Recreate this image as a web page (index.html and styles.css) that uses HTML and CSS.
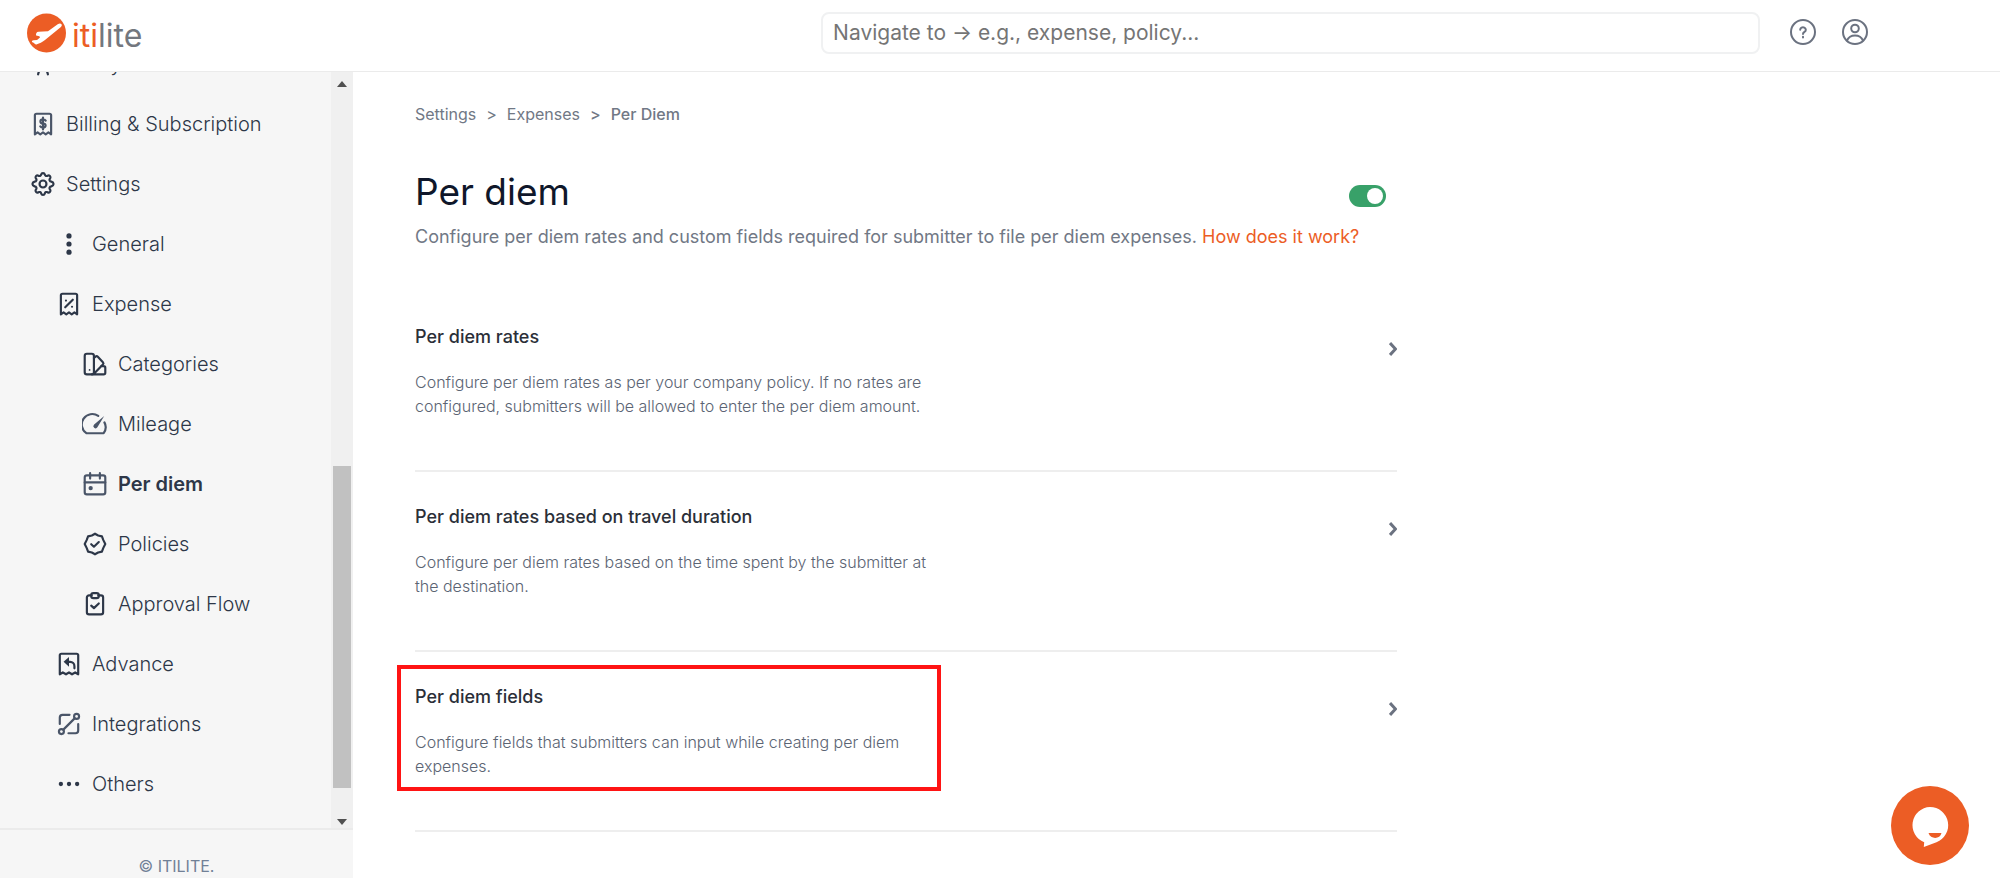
FILE: index.html
```html
<!DOCTYPE html>
<html lang="en">
<head>
    <meta charset="UTF-8">
    <meta name="viewport" content="width=device-width, initial-scale=1.0">
    <title>Per diem - itilite</title>
    <link rel="stylesheet" href="styles.css">
</head>
<body>
    <header class="header">
        <a class="logo" href="#">
            <svg class="logo-mark" viewBox="0 0 39 39" aria-hidden="true">
                <circle cx="19.5" cy="19.5" r="19.5" fill="#ec5d25"/>
                <path d="M34.500 10.800c.7 1 .2 2.200-.9 3L18 26.500c-3 2.300-5.500 3.500-8 4.300-1.500.5-2.300-.2-3-1.200l-2-1c-.3-1 .4-1.700 1.500-1.800l3.500-.4 3-2.400-.6-1.300-3.300-.7c-.5-1.800.5-3.600 2.400-3.700l9.500-.5 9.700-7c1.500-1 3-1.200 3.800 0z" fill="#fff"/>
            </svg>
            <span class="logo-text"><span class="logo-accent">iti</span>lite</span>
        </a>
        <input class="search" type="text" aria-label="Navigate to" placeholder="Navigate to → e.g., expense, policy...">
        <div class="header-actions">
            <button type="button" aria-label="Help">
                <svg class="icon" viewBox="0 0 26 26">
                    <circle cx="13" cy="13" r="12"/>
                    <path d="M10.200 10.800a2.800 2.500 0 1 1 4.300 2.100c-1 .6-1.500 1-1.500 2.200M13 17.800v.7"/>
                </svg>
            </button>
            <button type="button" aria-label="Account">
                <svg class="icon" viewBox="0 0 26 26">
                    <circle cx="13" cy="13" r="12"/>
                    <circle cx="13" cy="9.500" r="3.800"/>
                    <path d="M5 21.500c1.500-3.500 4.500-5 8-5s6.500 1.500 8 5"/>
                </svg>
            </button>
        </div>
    </header>

    <div class="layout">
        <aside class="sidebar">
            <div class="nav-area">
                <nav class="nav">
                    <a class="nav-item" href="#">
                        <svg class="icon" viewBox="0 0 24 24"><circle cx="12" cy="7" r="5"/><path d="M7.500 21.500c.5-3 2-5 4.500-6.500 2.500 1.500 4 3.500 4.500 6.500"/></svg>
                        Policy
                    </a>
                    <a class="nav-item" href="#">
                        <svg class="icon soft" viewBox="0 0 24 24"><path d="M4.500 21.500V4a1.500 1.500 0 0 1 1.500-1.500h12A1.500 1.500 0 0 1 19.500 4v17.500l-2.500-1.700-2.500 1.700-2.500-1.700-2.500 1.700-2.500-1.700z"/><path d="M14.500 8.800c-.5-.7-1.300-1-2.500-1-3.200 0-3.200 3.700 0 3.700s3.200 3.700 0 3.700c-1.200 0-2-.3-2.500-1M12 6v11"/></svg>
                        Billing &amp; Subscription
                    </a>
                    <a class="nav-item" href="#">
                        <svg class="icon" viewBox="0 0 24 24"><path d="M10.325 3.317c.426-1.756 2.924-1.756 3.350 0a1.724 1.724 0 0 0 2.573 1.066c1.543-.94 3.310.826 2.370 2.370a1.724 1.724 0 0 0 1.065 3.072c2.756.926 2.756 3.424 0 4.350a1.724 1.724 0 0 0-1.066 3.073c.94 1.543-.826 3.310-2.370 2.370a1.724 1.724 0 0 0-2.572 1.065c-.426 1.756-2.924 1.756-3.350 0a1.724 1.724 0 0 0-2.573-1.066c-1.543.94-3.310-.826-2.370-2.370a1.724 1.724 0 0 0-1.065-3.072c-2.756-.926-2.756-3.424 0-4.350a1.724 1.724 0 0 0 1.066-3.073c-.94-1.543.826-3.310 2.370-2.370a1.724 1.724 0 0 0 2.572-1.065z"/><circle cx="12" cy="12" r="3.200"/></svg>
                        Settings
                    </a>
                    <a class="nav-item level-1" href="#">
                        <svg class="icon dots" viewBox="0 0 24 24"><circle cx="12" cy="4.500" r="2.400"/><circle cx="12" cy="12" r="2.400"/><circle cx="12" cy="19.500" r="2.400"/></svg>
                        General
                    </a>
                    <a class="nav-item level-1" href="#">
                        <svg class="icon" viewBox="0 0 24 24"><path d="M4.500 21.500V4a1.500 1.500 0 0 1 1.500-1.500h12A1.500 1.500 0 0 1 19.500 4v17.500l-2.500-1.700-2.500 1.700-2.500-1.700-2.500 1.700-2.500-1.700zM8.500 15l7-7M9.200 8.800v.01M14.800 14.500v.01"/></svg>
                        Expense
                    </a>
                    <a class="nav-item level-2" href="#">
                        <svg class="icon" viewBox="0 0 24 24"><rect x="2.500" y="2.500" width="8.500" height="19" rx="2"/><path d="M11 6.500l1.500-1.300a1.500 1.500 0 0 1 2.100.1l4.700 5a1.500 1.500 0 0 1 0 2.100L11 21M17.500 14H20a1.500 1.500 0 0 1 1.500 1.500V20a1.500 1.500 0 0 1-1.500 1.500H9"/><circle class="dot" cx="7" cy="17.500" r=".8"/></svg>
                        Categories
                    </a>
                    <a class="nav-item level-2" href="#">
                        <svg class="icon soft" viewBox="0 0 24 24"><path d="M15 4.500A9.500 9.500 0 0 0 4 20.500h16a9.500 9.500 0 0 0 .7-10"/><path class="dot" d="M20.500 4.500l-9.300 8a2 2 0 1 0 3 2.600z"/></svg>
                        Mileage
                    </a>
                    <a class="nav-item level-2 active" href="#">
                        <svg class="icon soft" viewBox="0 0 24 24"><rect x="2.500" y="4" width="19" height="17.500" rx="2"/><path d="M2.500 10.500h19M7.500 2v5M16.500 2v5"/><circle class="dot" cx="8" cy="15.800" r="2"/></svg>
                        Per diem
                    </a>
                    <a class="nav-item level-2" href="#">
                        <svg class="icon" viewBox="0 0 24 24"><path d="M12 2.500l2.900 1.600 3.500.9 1.200 3.200 1.900 3.800-1.900 3.800-1.200 3.200-3.500.9-2.900 1.600-2.900-1.600-3.500-.9-1.200-3.200L2.500 12l1.900-3.800L5.600 5l3.500-.9zM8.500 12.200l2.500 2.300 4.500-4.300"/></svg>
                        Policies
                    </a>
                    <a class="nav-item level-2" href="#">
                        <svg class="icon" viewBox="0 0 24 24"><path d="M9 4H6.500a2 2 0 0 0-2 2v13.500a2 2 0 0 0 2 2h11a2 2 0 0 0 2-2V6a2 2 0 0 0-2-2H15M8.500 13.500l2.500 2.300 4.500-4.300"/><rect x="8.500" y="2" width="7" height="4.500" rx="2"/></svg>
                        Approval Flow
                    </a>
                    <a class="nav-item level-1" href="#">
                        <svg class="icon" viewBox="0 0 24 24"><path d="M3.500 21.500V4A1.500 1.500 0 0 1 5 2.500h14A1.500 1.500 0 0 1 20.500 4v17.500l-2.800-1.700-2.900 1.700-2.800-1.700-2.800 1.700-2.900-1.700zM17 16v-2a4 4 0 0 0-4-4h-3"/><path class="dot" d="M12 5.500L7 10l5 4.500z"/></svg>
                        Advance
                    </a>
                    <a class="nav-item level-1" href="#">
                        <svg class="icon soft" viewBox="0 0 24 24"><circle cx="5" cy="19" r="2.300"/><circle cx="19" cy="5" r="2.300"/><path d="M6.800 17.200L17.200 6.800M3.500 12V6A2.500 2.500 0 0 1 6 3.500h6.500M20.500 12v6a2.500 2.500 0 0 1-2.500 2.500h-6.500"/></svg>
                        Integrations
                    </a>
                    <a class="nav-item level-1" href="#">
                        <svg class="icon dots" viewBox="0 0 24 24"><circle cx="4.500" cy="12" r="2"/><circle cx="12" cy="12" r="2"/><circle cx="19.500" cy="12" r="2"/></svg>
                        Others
                    </a>
                </nav>
                <div class="scrollbar" aria-hidden="true">
                    <span class="arrow arrow-up"></span>
                    <div class="track"><div class="thumb"></div></div>
                    <span class="arrow arrow-down"></span>
                </div>
            </div>
            <footer class="sidebar-footer">© ITILITE.</footer>
        </aside>

        <main class="content">
            <nav class="breadcrumb" aria-label="Breadcrumb">
                <a href="#">Settings</a>
                <span>&gt;</span>
                <a href="#">Expenses</a>
                <span class="current">&gt;</span>
                <a class="current" href="#">Per Diem</a>
            </nav>

            <div class="title-row">
                <h1>Per diem</h1>
                <input class="toggle" type="checkbox" aria-label="Enable per diem" checked>
            </div>
            <p class="subtitle">Configure per diem rates and custom fields required for submitter to file per diem expenses. <a href="#">How does it work?</a></p>

            <section class="options">
                <article class="option">
                    <div class="option-text">
                        <h2>Per diem rates</h2>
                        <p>Configure per diem rates as per your company policy. If no rates are configured, submitters will be allowed to enter the per diem amount.</p>
                    </div>
                    <button type="button" aria-label="Open per diem rates">
                        <svg viewBox="0 0 8 14"><path d="M1 1l5.500 6L1 13"/></svg>
                    </button>
                </article>
                <article class="option">
                    <div class="option-text">
                        <h2>Per diem rates based on travel duration</h2>
                        <p>Configure per diem rates based on the time spent by the submitter at the destination.</p>
                    </div>
                    <button type="button" aria-label="Open travel duration rates">
                        <svg viewBox="0 0 8 14"><path d="M1 1l5.500 6L1 13"/></svg>
                    </button>
                </article>
                <article class="option">
                    <div class="option-text highlight">
                        <h2>Per diem fields</h2>
                        <p>Configure fields that submitters can input while creating per diem expenses.</p>
                    </div>
                    <button type="button" aria-label="Open per diem fields">
                        <svg viewBox="0 0 8 14"><path d="M1 1l5.500 6L1 13"/></svg>
                    </button>
                </article>
            </section>
        </main>
    </div>

    <button class="chat-button" type="button" aria-label="Open chat">
        <svg viewBox="0 0 78 78">
            <path d="M39 20a18.200 18.200 0 0 1 6.500 35.200L32.800 60l.4-4.800A18.200 18.200 0 0 1 39 20z" fill="#fff"/>
            <path d="M37.500 46h13c-1.500 6.500-11 6.500-13 0z" fill="#ec5d25"/>
        </svg>
    </button>
</body>
</html>
```

FILE: styles.css
```css
:root {
    --accent: #ec5d25;
    --text-dark: #0f172a;
    --text-nav: #2d3748;
    --text-muted: #717885;
    --icon: #2d3748;
    --icon-soft: #4a5568;
    --sidebar-bg: #f6f6f6;
    --border: #ebebeb;
}

* {
    margin: 0;
    padding: 0;
    box-sizing: border-box;
}

body {
    height: 100vh;
    display: flex;
    flex-direction: column;
    overflow: hidden;
    background: #fff;
    color: var(--text-dark);
    font-family: Inter, 'Liberation Sans', sans-serif;
}

a {
    color: inherit;
    text-decoration: none;
}

button {
    border: none;
    background: none;
    cursor: pointer;
}

svg {
    display: block;
}

.icon {
    width: 26px;
    height: 26px;
    flex-shrink: 0;
    color: var(--icon);
    fill: none;
    stroke: currentColor;
    stroke-width: 2;
    stroke-linecap: round;
    stroke-linejoin: round;
}

.icon.soft {
    color: var(--icon-soft);
}

.icon .dot,
.icon.dots {
    fill: currentColor;
    stroke: none;
}

/* Header */
.header {
    height: 72px;
    flex-shrink: 0;
    display: flex;
    align-items: flex-start;
    padding: 12px 132px 0 27px;
    border-bottom: 1px solid var(--border);
}

.logo {
    display: flex;
    align-items: center;
    gap: 6px;
}

.logo-mark {
    width: 39px;
    height: 40px;
}

.logo-text {
    padding-top: 6px;
    font-size: 32px;
    line-height: 36px;
    font-weight: 400;
    color: #73777e;
}

.logo-accent {
    color: var(--accent);
}

.search {
    width: 51%;
    height: 42px;
    margin-left: auto;
    padding: 0 10px 2px;
    border: 2px solid #f0f1f2;
    border-radius: 8px;
    font: inherit;
    font-size: 21px;
}

.search::placeholder {
    color: #757575;
}

.header-actions {
    display: flex;
    gap: 26px;
    padding: 7px 0 0 30px;
}

.header-actions .icon {
    color: #6b7280;
}

/* Sidebar */
.layout {
    flex: 1;
    min-height: 0;
    display: flex;
}

.sidebar {
    width: 353px;
    flex-shrink: 0;
    display: flex;
    flex-direction: column;
    background: var(--sidebar-bg);
}

.nav-area {
    flex: 1;
    min-height: 0;
    display: flex;
}

.nav {
    flex: 1;
    display: flex;
    flex-direction: column;
    justify-content: flex-end;
    padding-bottom: 14px;
    overflow: hidden;
}

.nav-item {
    height: 60px;
    flex-shrink: 0;
    display: flex;
    align-items: center;
    gap: 10px;
    padding-left: 30px;
    font-size: 20px;
    font-weight: 300;
    color: var(--text-nav);
}

.level-1 {
    padding-left: 56px;
}

.level-2 {
    padding-left: 82px;
}

.active {
    font-weight: 600;
}

.scrollbar {
    width: 22px;
    display: flex;
    flex-direction: column;
    align-items: center;
    padding: 9px 0 3px;
    background: #f0f0f0;
}

.arrow {
    border: 5px solid transparent;
}

.arrow-up {
    border-top: none;
    border-bottom: 6px solid #505050;
}

.arrow-down {
    border-bottom: none;
    border-top: 6px solid #505050;
}

.track {
    flex: 1;
    display: flex;
    align-items: flex-end;
    padding-bottom: 31px;
}

.thumb {
    width: 18px;
    height: 46%;
    background: #c1c1c1;
}

.sidebar-footer {
    padding: 24px 0 0;
    border-top: 2px solid var(--border);
    font-size: 16px;
    line-height: 24px;
    text-align: center;
    color: #718096;
}

/* Content */
.content {
    flex: 1;
    max-width: 1044px;
    padding: 30px 0 0 62px;
}

.breadcrumb {
    display: flex;
    gap: 10px;
    font-size: 16px;
    line-height: 24px;
    color: var(--text-muted);
}

.current {
    font-weight: 500;
}

.title-row {
    display: flex;
    align-items: center;
    justify-content: space-between;
    margin-top: 41px;
    padding-right: 11px;
}

h1 {
    font-size: 37px;
    line-height: 50px;
    font-weight: 400;
}

.toggle {
    appearance: none;
    width: 37px;
    height: 22px;
    padding: 3px;
    margin-top: 8px;
    border-radius: 11px;
    background: #cbd5e0;
    cursor: pointer;
}

.toggle::before {
    content: '';
    display: block;
    width: 16px;
    height: 16px;
    border-radius: 50%;
    background: #fff;
}

.toggle:checked {
    background: #38a169;
}

.toggle:checked::before {
    margin-left: auto;
}

.subtitle {
    margin-top: 6px;
    font-size: 18px;
    line-height: 28px;
    color: var(--text-muted);
}

.subtitle a {
    color: var(--accent);
}

.options {
    margin-top: 41px;
}

.option {
    height: 180px;
    display: flex;
    align-items: flex-start;
    justify-content: space-between;
    padding-top: 33px;
    border-bottom: 2px solid #eee;
}

.option-text {
    width: 520px;
}

.option h2 {
    font-size: 18px;
    line-height: 24px;
    font-weight: 500;
    color: #2b2f38;
}

.option p {
    margin-top: 21px;
    font-size: 16px;
    line-height: 24px;
    font-weight: 300;
    color: #5b6473;
}

.option button {
    margin-top: 17px;
}

.option svg {
    width: 8px;
    height: 14px;
    fill: none;
    stroke: #6b7280;
    stroke-width: 3;
}

.highlight {
    position: relative;
}

.highlight::after {
    content: '';
    position: absolute;
    inset: -20px -6px -13px -18px;
    border: 4px solid #ff1414;
}

.chat-button {
    position: fixed;
    right: 31px;
    bottom: 13px;
    width: 78px;
    height: 79px;
    border-radius: 50%;
    background: var(--accent);
}
```
